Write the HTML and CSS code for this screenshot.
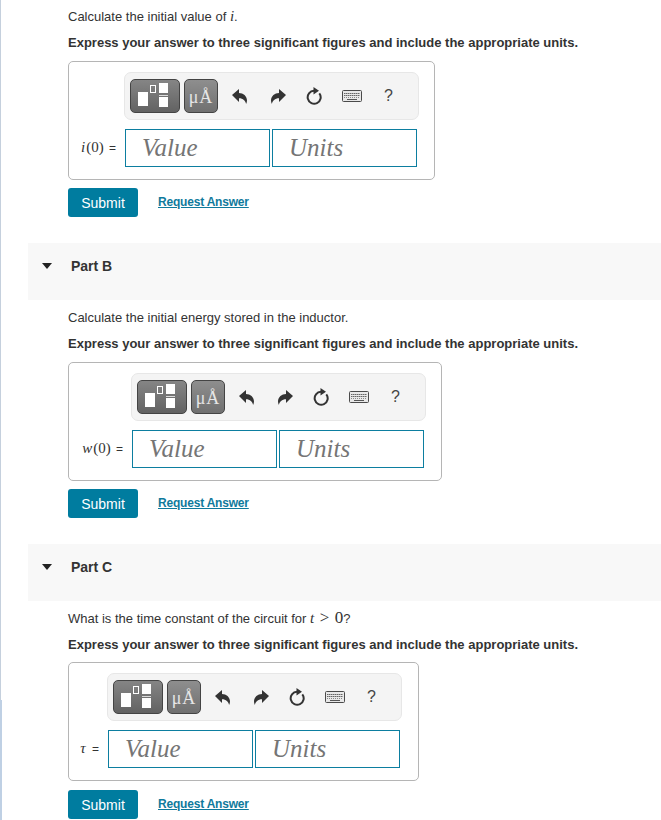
FILE: index.html
```html
<!DOCTYPE html>
<html lang="en">
<head>
    <meta charset="UTF-8">
    <meta name="viewport" content="width=device-width, initial-scale=1.0">
    <title>Parts</title>
    <link rel="stylesheet" href="styles.css">
</head>
<body>
    <svg class="defs" width="0" height="0">
        <symbol id="undo" viewBox="0 0 15 15">
            <path d="M0 6 7 0v4c4.200 0 8 3 8 7.500 0 1.300-.3 2.500-.9 3.500-.6-3.300-3-5.800-7.100-5.800V13z"/>
        </symbol>
        <symbol id="redo" viewBox="0 0 15 15">
            <path d="M15 6 8 0v4C3.800 4 0 7 0 11.500 0 12.800.3 14 .9 15c.6-3.300 3-5.800 7.100-5.800V13z"/>
        </symbol>
        <symbol id="reset" viewBox="0 0 17 18">
            <path d="M13.300 6.300A6.500 6.500 0 1 1 8 3.800" fill="none" stroke="#333" stroke-width="2"/>
            <path d="M7.500 0v7.500l5.500-3.700z" fill="#333"/>
        </symbol>
        <symbol id="keys" viewBox="0 0 20 12">
            <rect x=".5" y=".5" width="19" height="11" rx="1" fill="#e8e8e8" stroke="#4a4a4a"/>
            <path d="M2 3.500h16M2 5.500h16" stroke="#666" stroke-dasharray="1.500 .5"/>
            <path d="M2 7.500h16" stroke="#888" stroke-dasharray="1 1"/>
            <path d="M5 9.500h10" stroke="#555"/>
        </symbol>
    </svg>

    <div class="part-body first">
        <p class="prompt">Calculate the initial value of <i class="math">i</i>.</p>
        <p class="instr">Express your answer to three significant figures and include the appropriate units.</p>
        <div class="answer-box box-a">
            <div class="toolbar">
                <div class="tool-btn tool-templates"><span class="sq-big"></span><span class="sq-small"></span><span class="frac"><span></span><span class="bar"></span><span></span></span></div>
                <div class="tool-btn tool-units"><span>μÅ</span></div>
                <svg class="ic ic-undo"><use href="#undo"/></svg>
                <svg class="ic ic-redo"><use href="#redo"/></svg>
                <svg class="ic-reset"><use href="#reset"/></svg>
                <svg class="ic-keys"><use href="#keys"/></svg>
                <span class="help">?</span>
            </div>
            <div class="input-row">
                <span class="lhs"><i class="math">i</i><span class="paren">(0)</span> =</span>
                <div class="field">Value</div>
                <div class="field">Units</div>
            </div>
        </div>
        <div class="actions">
            <button class="submit" type="button">Submit</button>
            <a class="req" href="#">Request Answer</a>
        </div>
    </div>

    <div class="part-head"><span class="caret"></span><span class="part-name">Part B</span></div>
    <div class="part-body">
        <p class="prompt">Calculate the initial energy stored in the inductor.</p>
        <p class="instr">Express your answer to three significant figures and include the appropriate units.</p>
        <div class="answer-box box-b">
            <div class="toolbar">
                <div class="tool-btn tool-templates"><span class="sq-big"></span><span class="sq-small"></span><span class="frac"><span></span><span class="bar"></span><span></span></span></div>
                <div class="tool-btn tool-units"><span>μÅ</span></div>
                <svg class="ic ic-undo"><use href="#undo"/></svg>
                <svg class="ic ic-redo"><use href="#redo"/></svg>
                <svg class="ic-reset"><use href="#reset"/></svg>
                <svg class="ic-keys"><use href="#keys"/></svg>
                <span class="help">?</span>
            </div>
            <div class="input-row">
                <span class="lhs"><i class="math">w</i><span class="paren">(0)</span> =</span>
                <div class="field">Value</div>
                <div class="field">Units</div>
            </div>
        </div>
        <div class="actions">
            <button class="submit" type="button">Submit</button>
            <a class="req" href="#">Request Answer</a>
        </div>
    </div>

    <div class="part-head"><span class="caret"></span><span class="part-name">Part C</span></div>
    <div class="part-body">
        <p class="prompt">What is the time constant of the circuit for <i class="math">t</i> <span class="paren gt">&gt; 0</span>?</p>
        <p class="instr">Express your answer to three significant figures and include the appropriate units.</p>
        <div class="answer-box box-c">
            <div class="toolbar">
                <div class="tool-btn tool-templates"><span class="sq-big"></span><span class="sq-small"></span><span class="frac"><span></span><span class="bar"></span><span></span></span></div>
                <div class="tool-btn tool-units"><span>μÅ</span></div>
                <svg class="ic ic-undo"><use href="#undo"/></svg>
                <svg class="ic ic-redo"><use href="#redo"/></svg>
                <svg class="ic-reset"><use href="#reset"/></svg>
                <svg class="ic-keys"><use href="#keys"/></svg>
                <span class="help">?</span>
            </div>
            <div class="input-row">
                <span class="lhs"><i class="math">τ</i> =</span>
                <div class="field">Value</div>
                <div class="field">Units</div>
            </div>
        </div>
        <div class="actions">
            <button class="submit" type="button">Submit</button>
            <a class="req" href="#">Request Answer</a>
        </div>
    </div>
</body>
</html>
```

FILE: styles.css
```css
* {
    margin: 0;
    padding: 0;
    box-sizing: border-box;
}
html, body {
    height: 820px;
    overflow: hidden;
}
body {
    padding-left: 28px;
    font-family: "Liberation Sans", sans-serif;
    font-size: 13px;
    color: #333;
    background:
        linear-gradient(#c5d0dd, #c5d0dd) 0 0 / 1px 700px no-repeat,
        linear-gradient(#bfd0e4, #bfd0e4) 0 700px / 2px 120px no-repeat,
        #fff;
}
.defs {
    display: block;
}

.part-body {
    padding: 10px 0 0 40px;
    height: 244px;
}
.part-body.first {
    padding-top: 9px;
    height: 243px;
}
.prompt {
    height: 16px;
    line-height: 16px;
}
.instr {
    margin-top: 10px;
    height: 16px;
    line-height: 16px;
    font-weight: bold;
}
.math {
    font-family: "Liberation Serif", serif;
    font-style: italic;
    font-size: 15px;
    line-height: 0;
}
.paren {
    font-family: "Liberation Serif", serif;
    font-size: 15px;
    line-height: 0;
}
.gt {
    margin-left: 2px;
    font-size: 17px;
    word-spacing: 1px;
}

.answer-box {
    margin-top: 10px;
    height: 119px;
    border: 1px solid #b5b5b5;
    border-radius: 5px;
    padding: 10px 15px 0 0;
}
.box-a { width: 367px; }
.box-b { width: 374px; }
.box-c {
    width: 351px;
    margin-top: 9px;
    padding-right: 16px;
}
.box-c + .actions {
    margin-top: 9px;
}

.toolbar {
    display: flex;
    align-items: center;
    height: 48px;
    width: 295px;
    margin-left: auto;
    background: #f4f4f4;
    border: 1px solid #e7e7e7;
    border-radius: 7px;
    padding-left: 5px;
}
.tool-btn {
    position: relative;
    height: 34px;
    border: 1px solid #444;
    border-radius: 5px;
    background: linear-gradient(#858585, #626262);
}
.tool-templates {
    width: 50px;
}
.sq-big {
    position: absolute;
    left: 7px;
    top: 12px;
    width: 10px;
    height: 14px;
    background: #fff;
}
.sq-small {
    position: absolute;
    left: 19px;
    top: 5px;
    width: 6px;
    height: 8px;
    border: 1px solid #fff;
}
.frac {
    position: absolute;
    left: 28px;
    top: 3px;
    width: 9px;
    height: 24px;
    display: flex;
    flex-direction: column;
}
.frac span {
    display: block;
    height: 10px;
    background: #fff;
}
.frac .bar {
    height: 1px;
    margin: 2px 0;
    background: #ddd;
}
.tool-units {
    width: 34px;
    margin-left: 4px;
    padding-top: 2px;
    display: flex;
    align-items: center;
    justify-content: center;
    background: linear-gradient(#8e8e8e, #707070);
    color: #e6e6e6;
    font-family: "Liberation Serif", serif;
    font-size: 18px;
    letter-spacing: 1px;
}
.ic {
    width: 15px;
    height: 15px;
    fill: #333;
}
.ic-undo { margin-left: 14px; }
.ic-redo { margin-left: 24px; }
.ic-reset {
    width: 17px;
    height: 18px;
    margin-left: 20px;
}
.ic-keys {
    width: 20px;
    height: 12px;
    margin-left: 19px;
}
.help {
    margin-left: 22px;
    font-size: 16px;
    color: #444;
}

.input-row {
    display: flex;
    align-items: center;
    justify-content: flex-end;
    gap: 2px;
    margin-top: 9px;
    padding-right: 2px;
}
.lhs {
    margin-right: 7px;
    font-size: 12px;
    word-spacing: 2px;
    white-space: nowrap;
}
.lhs .math {
    margin-right: 1px;
}
.field {
    width: 145px;
    height: 38px;
    line-height: 36px;
    border: 1px solid #0c7ea0;
    padding-left: 16px;
    font-family: "Liberation Serif", serif;
    font-style: italic;
    font-size: 25px;
    color: #757575;
    background: #fff;
}

.actions {
    display: flex;
    align-items: flex-start;
    margin-top: 8px;
}
.submit {
    width: 70px;
    height: 29px;
    border: none;
    border-radius: 3px;
    background: #007c9f;
    color: #fff;
    font-family: "Liberation Sans", sans-serif;
    font-size: 14px;
}
.req {
    margin-left: 20px;
    margin-top: 7px;
    color: #0f7a9c;
    font-size: 12px;
    font-weight: bold;
    letter-spacing: -0.2px;
}

.part-head {
    display: flex;
    align-items: flex-start;
    height: 57px;
    background: #f8f8f8;
    padding: 15px 0 0 14px;
    font-size: 14px;
}
.caret {
    width: 0;
    height: 0;
    margin-top: 5px;
    border-left: 5px solid transparent;
    border-right: 5px solid transparent;
    border-top: 6px solid #222;
}
.part-name {
    margin-left: 19px;
    font-weight: bold;
}
```
